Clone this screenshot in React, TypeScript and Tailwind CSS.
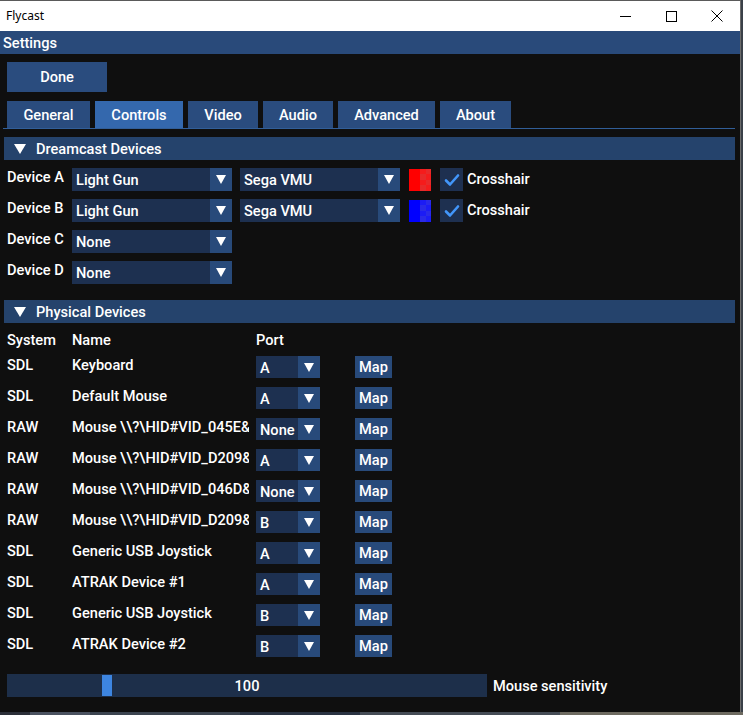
import React from "react";

const F = { fontFamily: "Roboto, 'Noto Sans', sans-serif" };

function Arrow({ size = 10 }: { size?: number }) {
  return (
    <svg width={size} height={size - 1} viewBox="0 0 10 9">
      <polygon points="0,0 10,0 5,9" fill="#ffffff" />
    </svg>
  );
}

function Combo({ text, w, tall = false }: { text: string; w: string; tall?: boolean }) {
  return (
    <div className={`flex ${w} ${tall ? "h-[23px]" : "h-[22px]"} bg-[#1d3050]`}>
      <div className="flex-1 pl-[4px] flex items-center pt-[2px] leading-none whitespace-nowrap overflow-hidden">{text}</div>
      <div className="w-[22px] bg-[#284a7a] flex items-center justify-center">
        <Arrow />
      </div>
    </div>
  );
}

function Swatch({ base, c1, c2 }: { base: string; c1: string; c2: string }) {
  return (
    <div className="flex w-[22px] h-[22px]">
      <div className="w-[11px] h-full" style={{ background: base }} />
      <div className="w-[11px] h-full grid grid-cols-2 grid-rows-4">
        {Array.from({ length: 8 }).map((_, i) => {
          const r = Math.floor(i / 2);
          const c = i % 2;
          return <div key={i} style={{ background: (r + c) % 2 === 0 ? c1 : c2 }} />;
        })}
      </div>
    </div>
  );
}

function Check() {
  return (
    <div className="w-[23px] h-[23px] bg-[#1e3050] flex items-center justify-center">
      <svg width="16" height="14" viewBox="0 0 16 14">
        <polyline points="2,7.5 6,11.5 14,2.5" fill="none" stroke="#4296fa" strokeWidth="2.6" strokeLinecap="round" strokeLinejoin="round" />
      </svg>
    </div>
  );
}

function Header({ title }: { title: string }) {
  return (
    <div className="ml-[4px] mr-[5px] h-[23px] bg-[#25436c] flex items-center">
      <div className="ml-[10px] w-[22px] flex items-center">
        <svg width="12" height="10" viewBox="0 0 12 10">
          <polygon points="0,0 12,0 6,10" fill="#ffffff" />
        </svg>
      </div>
      <span className="pt-[3px]">{title}</span>
    </div>
  );
}

const devices = [
  ["SDL", "Keyboard", "A"],
  ["SDL", "Default Mouse", "A"],
  ["RAW", "Mouse \\\\?\\HID#VID_045E&PID_0040&MI_00", "None"],
  ["RAW", "Mouse \\\\?\\HID#VID_D209&PID_1601&MI_00", "A"],
  ["RAW", "Mouse \\\\?\\HID#VID_046D&PID_C077", "None"],
  ["RAW", "Mouse \\\\?\\HID#VID_D209&PID_1602&MI_00", "B"],
  ["SDL", "Generic USB Joystick", "A"],
  ["SDL", "ATRAK Device #1", "A"],
  ["SDL", "Generic USB Joystick", "B"],
  ["SDL", "ATRAK Device #2", "B"],
];

export default function App() {
  return (
    <div className="w-[743px] h-[715px] bg-[#3a4048] overflow-hidden flex flex-col">
      <div className="w-[741px] h-[712px] flex flex-col border-r border-[#6b6b6b] border-t border-t-[#5a5a5a]">
        {/* OS title bar */}
        <div className="h-[30px] bg-white flex items-center shrink-0">
          <span className="ml-[6px] text-[12px] text-black" style={{ fontFamily: "'Noto Sans', 'Liberation Sans', sans-serif" }}>
            Flycast
          </span>
          <div className="flex-1" />
          <div className="w-[46px] h-full flex items-center justify-center">
            <div className="w-[11px] h-px bg-black mt-[1px]" />
          </div>
          <div className="w-[46px] h-full flex items-center justify-center">
            <div className="w-[11px] h-[11px] border border-black" />
          </div>
          <div className="w-[46px] h-full flex items-center justify-center">
            <svg width="12" height="12" viewBox="0 0 12 12">
              <path d="M0.5 0.5 L11.5 11.5 M11.5 0.5 L0.5 11.5" stroke="#000" strokeWidth="1" />
            </svg>
          </div>
        </div>

        {/* App */}
        <div className="flex-1 flex flex-col bg-[#0f0f0f] text-white text-[14.6px] font-medium" style={F}>
          <div className="h-[23px] bg-[#294a7a] flex items-center pl-[3px] shrink-0">
            <span className="pt-[3px]">Settings</span>
          </div>

          <div className="ml-[7px] mt-[8px] w-[100px] h-[30px] bg-[#2a4c7e] flex items-center justify-center pt-[2px]">Done</div>

          <div className="mt-[9px] ml-[7px] flex gap-[5px] h-[27px]">
            {[
              ["General", "w-[83px]"],
              ["Controls", "w-[88px]"],
              ["Video", "w-[70px]"],
              ["Audio", "w-[70px]"],
              ["Advanced", "w-[97px]"],
              ["About", "w-[71px]"],
            ].map(([t, w]) => (
              <div
                key={t}
                className={`${w} h-full flex items-center justify-center pt-[3px] ${t === "Controls" ? "bg-[#3468ad]" : "bg-[#2a4c7e]"}`}
              >
                {t}
              </div>
            ))}
          </div>
          <div className="ml-[3px] mr-[5px] h-px bg-[#315e98]" />

          <div className="mt-[8px]">
            <Header title="Dreamcast Devices" />
          </div>

          <div className="mt-[4px] flex flex-col">
            {[
              ["Device A", "Light Gun", true, "#ff0000", "#f51c1c", "#e82a2a"],
              ["Device B", "Light Gun", true, "#0000ff", "#1c1cf5", "#2a2ae8"],
              ["Device C", "None", false],
              ["Device D", "None", false],
            ].map(([label, val, ext, base, c1, c2]) => (
              <div key={label as string} className="h-[31px] flex items-center">
                <div className="w-[72px] pl-[7px] mb-[3px]">{label as string}</div>
                <Combo text={val as string} w="w-[160px]" tall />
                {ext && (
                  <>
                    <div className="ml-[8px]">
                      <Combo text="Sega VMU" w="w-[160px]" tall />
                    </div>
                    <div className="ml-[9px]">
                      <Swatch base={base as string} c1={c1 as string} c2={c2 as string} />
                    </div>
                    <div className="ml-[9px]">
                      <Check />
                    </div>
                    <span className="ml-[4px] pt-[1px]">Crosshair</span>
                  </>
                )}
              </div>
            ))}
          </div>

          <div className="mt-[12px]">
            <Header title="Physical Devices" />
          </div>

          <div className="mt-[6px] h-[22px] flex items-center pt-[2px]">
            <div className="w-[72px] pl-[7px]">System</div>
            <div className="w-[184px]">Name</div>
            <div>Port</div>
          </div>

          <div className="mt-[3px] flex flex-col">
            {devices.map(([sys, name, port], i) => (
              <div key={i} className="h-[31px] flex items-start">
                <div className="w-[72px] pl-[7px] leading-[22px]">{sys}</div>
                <div className="w-[177px] leading-[22px] whitespace-nowrap overflow-hidden">{name}</div>
                <div className="ml-[7px] mt-[2px]">
                  <Combo text={port} w="w-[64px]" />
                </div>
                <div className="ml-[35px] mt-[2px] w-[37px] h-[22px] bg-[#284a7a] flex items-center justify-center pt-[2px]">
                  Map
                </div>
              </div>
            ))}
          </div>

          <div className="mt-[10px] flex items-center">
            <div className="ml-[7px] w-[480px] h-[23px] bg-[#1d2f4a] flex items-center relative">
              <div className="absolute left-[95px] top-[1px] w-[10px] h-[21px] bg-[#3d85e0]" />
              <div className="relative w-full text-center pt-[2px]">100</div>
            </div>
            <span className="ml-[6px] pt-[2px]">Mouse sensitivity</span>
          </div>
        </div>
      </div>
      <div className="flex-1 flex">
        <div className="w-[30px] bg-[#2b2f38]" />
        <div className="w-[60px] bg-[#4a5260]" />
        <div className="w-[150px] bg-[#3c4450]" />
        <div className="w-[120px] bg-[#2a3342]" />
        <div className="w-[200px] bg-[#454c55]" />
        <div className="flex-1 bg-[#6d6a60]" />
      </div>
    </div>
  );
}
